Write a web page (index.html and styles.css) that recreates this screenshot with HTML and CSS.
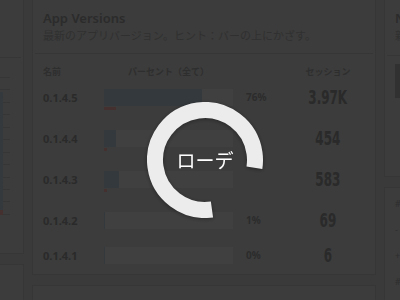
FILE: index.html
```html
<!DOCTYPE html>
<html lang="ja">
  <head>
    <meta charset="UTF-8" />
    <meta name="viewport" content="width=device-width, initial-scale=1.0" />
    <title>Dashboard</title>
    <link rel="stylesheet" href="styles.css">
  </head>
  <body>
    <div class="dashboard">
      <div class="column side">
        <section class="card daily">
          <header class="card-head blank"></header>
          <div class="chart">
            <div class="col" style="height: 54%"><div class="col-fill"></div><div class="col-crash"></div></div>
            <div class="col" style="height: 71%"><div class="col-fill"></div><div class="col-crash"></div></div>
            <div class="col" style="height: 63%"><div class="col-fill"></div><div class="col-crash"></div></div>
            <div class="col" style="height: 89%"><div class="col-fill"></div><div class="col-crash"></div></div>
          </div>
        </section>
        <section class="card"></section>
      </div>

      <div class="column main">
        <section class="card versions">
          <header class="card-head">
            <h2>App Versions</h2>
            <p>最新のアプリバージョン。ヒント：バーの上にかざす。</p>
          </header>
          <div class="version-table">
            <div class="version-row head">
              <span>名前</span>
              <span class="center">パーセント（全て）</span>
              <span></span>
              <span class="center">セッション</span>
            </div>
            <div class="version-row">
              <span class="name">0.1.4.5</span>
              <div class="usage">
                <div class="track"><div class="fill" style="width: 76%"></div></div>
                <div class="crash" style="width: 9%"></div>
              </div>
              <span class="pct">76%</span>
              <span class="sessions"><b>3.97K</b></span>
            </div>
            <div class="version-row">
              <span class="name">0.1.4.4</span>
              <div class="usage">
                <div class="track"><div class="fill" style="width: 9%"></div></div>
                <div class="crash" style="width: 2%"></div>
              </div>
              <span class="pct"></span>
              <span class="sessions"><b>454</b></span>
            </div>
            <div class="version-row">
              <span class="name">0.1.4.3</span>
              <div class="usage">
                <div class="track"><div class="fill" style="width: 12%"></div></div>
                <div class="crash" style="width: 2%"></div>
              </div>
              <span class="pct"></span>
              <span class="sessions"><b>583</b></span>
            </div>
            <div class="version-row">
              <span class="name">0.1.4.2</span>
              <div class="usage">
                <div class="track"><div class="fill" style="width: 1%"></div></div>
              </div>
              <span class="pct">1%</span>
              <span class="sessions"><b>69</b></span>
            </div>
            <div class="version-row">
              <span class="name">0.1.4.1</span>
              <div class="usage">
                <div class="track"><div class="fill" style="width: 0%"></div></div>
              </div>
              <span class="pct">0%</span>
              <span class="sessions"><b>6</b></span>
            </div>
          </div>
        </section>
        <section class="card"></section>
      </div>

      <div class="column extra">
        <section class="card users">
          <header class="card-head">
            <h2>N</h2>
            <p>新</p>
          </header>
          <div class="picker"></div>
        </section>
        <section class="card">
          <ul class="mini-list">
            <li>#</li>
            <li>-</li>
            <li>+</li>
            <li>#</li>
          </ul>
        </section>
      </div>
    </div>

    <div class="overlay">
      <div class="loader">
        <svg class="ring" width="116" height="116" viewBox="0 0 116 116">
          <circle cx="58" cy="58" r="50" />
        </svg>
        <div class="loader-label"><span>ローディング</span></div>
      </div>
    </div>
  </body>
</html>
```

FILE: styles.css
```css
* {
  box-sizing: border-box;
}

body {
  margin: 0;
  height: 300px;
  overflow: hidden;
  background-color: #c3c3c3;
  color: #949494;
  font-family: "Noto Sans", "Noto Sans CJK JP", sans-serif;
}

.dashboard {
  display: flex;
  gap: 8px;
  margin: -1px 0 0 -176px;
}

.column {
  flex: none;
  display: flex;
  flex-direction: column;
  gap: 10px;
}

.side,
.extra {
  width: 200px;
}

.main {
  width: 344px;
}

.card {
  background-color: #c8c8c8;
  border: 1px solid #b4b4b4;
  min-height: 60px;
}

.card-head {
  margin: 0 2px;
  padding: 9px 8px 10px;
  border-bottom: 1px solid #b4b4b4;
}

.card-head.blank {
  height: 58px;
}

.card-head h2 {
  margin: 0;
  font-size: 13px;
  line-height: 18px;
  font-weight: 600;
  color: #929292;
  white-space: nowrap;
}

.card-head p {
  margin: 1px 0 0;
  font-size: 11px;
  line-height: 15px;
  color: #a2a2a2;
  white-space: nowrap;
}

.users .card-head {
  padding-bottom: 12px;
}

/* daily chart, mostly scrolled out to the left */
.chart {
  margin-top: 19px;
  margin-bottom: 38px;
  height: 138px;
  padding-right: 20px;
  display: flex;
  align-items: flex-end;
  justify-content: flex-end;
  gap: 4px;
  background: repeating-linear-gradient(to bottom, #b4b4b4 0 1px, transparent 1px 12.45px) left top / calc(100% - 13px) 100% no-repeat;
}

.col {
  width: 10px;
  display: flex;
  flex-direction: column;
}

.col-fill {
  flex: 1;
  background-color: #aebfcc;
}

.col-crash {
  height: 5px;
  background-color: #e3a29a;
}

/* app versions table */
.version-row {
  display: grid;
  grid-template-columns: 61px 129px 57px 76px;
  align-items: start;
  padding: 8px 9px 9px 10px;
  line-height: 17px;
}

.version-row.head {
  padding: 12px 9px 3px 10px;
  font-size: 9px;
  line-height: 12px;
  font-weight: 700;
  color: #9c9c9c;
  white-space: nowrap;
}

.center {
  text-align: center;
}

.name {
  font-size: 11px;
  font-weight: 700;
  color: #8e8e8e;
}

.track {
  height: 17px;
  background-color: #d6d6d6;
}

.fill {
  height: 100%;
  min-width: 1px;
  background-color: #aebfcc;
}

.crash {
  height: 3px;
  margin: 1px 0 3px;
  background-color: #e3a29a;
}

.pct {
  padding-left: 13px;
  font-size: 10px;
  font-weight: 700;
  color: #939393;
}

.sessions {
  text-align: center;
}

.sessions b {
  display: inline-block;
  font-family: "DejaVu Sans Condensed", "DejaVu Sans", sans-serif;
  font-size: 19px;
  font-weight: 700;
  color: #8c8c8c;
  transform: scaleX(0.7);
}

.users {
  height: 178px;
}

.picker {
  margin: 8px 0 0 10px;
  height: 34px;
  background-color: #a4a4a4;
}

.mini-list {
  list-style: none;
  margin: 0;
  padding: 10px 10px;
  font-size: 9px;
  line-height: 12px;
  color: #999999;
}

.mini-list li {
  margin-bottom: 14px;
}

/* loading overlay */
.overlay {
  position: fixed;
  inset: 0;
  display: grid;
  place-items: center;
  background-color: rgba(0, 0, 0, 0.7);
}

.loader {
  position: relative;
  width: 116px;
  height: 116px;
  margin: 20px 0 0 10px;
}

.ring {
  display: block;
  filter: drop-shadow(0 1px 2px rgba(0, 0, 0, 0.35));
}

.ring circle {
  fill: none;
  stroke: #ececec;
  stroke-width: 16;
  stroke-dasharray: 250 64;
  transform: rotate(82deg);
  transform-origin: 58px 58px;
}

.loader-label {
  position: absolute;
  inset: 0;
  display: flex;
  align-items: center;
  justify-content: center;
}

.loader-label span {
  display: block;
  width: 3em;
  overflow: hidden;
  white-space: nowrap;
  font-family: "Noto Sans CJK JP", sans-serif;
  font-size: 19px;
  line-height: 24px;
  color: #ffffff;
}
```
